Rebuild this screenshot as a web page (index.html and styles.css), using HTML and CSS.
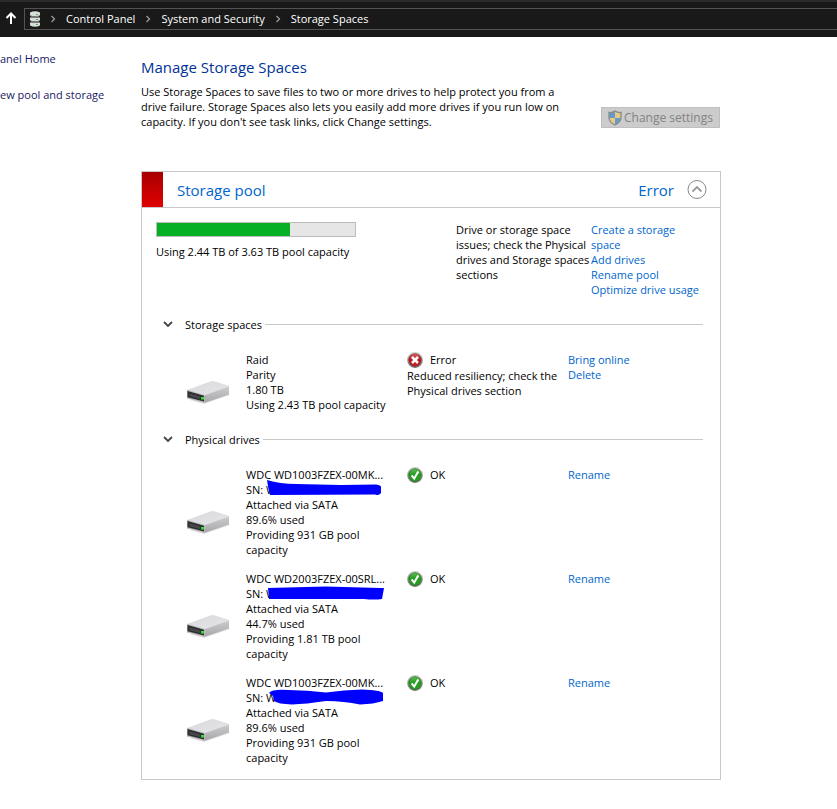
FILE: index.html
```html
<!DOCTYPE html>
<html lang="en">
<head>
<meta charset="utf-8">
<title>Storage Spaces</title>
<link rel="stylesheet" href="styles.css">
</head>
<body>
<svg class="symbols" aria-hidden="true">
  <defs>
    <linearGradient id="top-face" x1="0" y1="0" x2="1" y2="1"><stop offset="0" stop-color="#d9d9dc"/><stop offset="1" stop-color="#e6e6e9"/></linearGradient>
    <linearGradient id="side-face" x1="0" y1="0" x2="0" y2="1"><stop offset="0" stop-color="#cdcdcf"/><stop offset="1" stop-color="#a6a6a8"/></linearGradient>
    <linearGradient id="green-ball" x1="0" y1="0" x2="0" y2="1"><stop offset="0" stop-color="#63b957"/><stop offset=".5" stop-color="#239a1d"/><stop offset="1" stop-color="#2aa322"/></linearGradient>
    <linearGradient id="red-ball" x1="0" y1="0" x2="0" y2="1"><stop offset="0" stop-color="#d9666a"/><stop offset=".5" stop-color="#b5121b"/><stop offset="1" stop-color="#c9252d"/></linearGradient>
    <linearGradient id="rim" x1="0" y1="0" x2="0" y2="1"><stop offset="0" stop-color="#cfcfcf"/><stop offset="1" stop-color="#6e6e6e"/></linearGradient>
    <symbol id="drive" viewBox="0 0 48 48">
      <path d="M5 42 20 46 46 37 44 35 20 43Z" fill="#e2e2e2"/>
      <path d="M3 32 27 23.300Q28.500 22.800 30 23.200L44 27.500Q45.500 28 45 29.500L21 38.500Z" fill="url(#top-face)"/>
      <path d="M20 37.500 45 28.500V36.500L20 45Z" fill="url(#side-face)"/>
      <path d="M3 31.800 20.500 37V45L3 40.500Z" fill="#b9b9bb"/>
      <path d="M3.500 33 20 37.800V43.600L3.500 39.300Z" fill="#2d2f30"/>
      <path d="M5.500 35.500 16 38.500V41L5.500 38.200Z" fill="#464849"/>
      <rect x="17" y="39" width="3" height="2.500" fill="#35df35"/>
    </symbol>
    <symbol id="ok" viewBox="0 0 16 16">
      <circle cx="8" cy="8" r="7.900" fill="url(#rim)"/>
      <circle cx="8" cy="8" r="6.300" fill="url(#green-ball)" stroke="#176f16" stroke-width=".6"/>
      <path d="M4.600 8.300 7.200 11.400 11.300 4.400" fill="none" stroke="#fff" stroke-width="2"/>
    </symbol>
    <symbol id="error" viewBox="0 0 16 16">
      <circle cx="8" cy="8" r="7.900" fill="url(#rim)"/>
      <circle cx="8" cy="8" r="6.200" fill="url(#red-ball)" stroke="#8b1117" stroke-width=".6"/>
      <path d="M5 5 11 11M11 5 5 11" stroke="#fff" stroke-width="2.500"/>
    </symbol>
    <symbol id="crumb" viewBox="0 0 6 8"><path d="M1.500 1 4.500 4 1.500 7" fill="none" stroke="#999" stroke-width="1.300"/></symbol>
    <symbol id="chevron" viewBox="0 0 10 8"><path d="M1 1 5 5 9 1" fill="none" stroke="#444" stroke-width="1.800"/></symbol>
  </defs>
</svg>

<header class="toolbar">
  <button class="up" type="button" aria-label="Up">
    <svg width="12" height="14" viewBox="0 0 12 14"><path d="M6 12V1.500M1.500 6 6 1.500 10.500 6" fill="none" stroke="#fff" stroke-width="2"/></svg>
  </button>
  <nav class="address" aria-label="Address">
    <svg class="server" width="10" height="16" viewBox="0 0 10 16">
      <path d="M0 1.500Q5-1 10 1.500V4.500Q5 6 0 4.500Z" fill="#d9dcda"/>
      <path d="M0 6.500H10V9.500Q5 11 0 9.500ZM0 11.500H10V14.500Q5 17 0 14.500Z" fill="#d9dcda"/>
      <path d="M1 5H9V6H1ZM1 10H9V11H1Z" fill="#777"/>
      <path d="M6 3.500H8M6 8.500H8M6 13.500H8" stroke="#4fb548" stroke-width="1"/>
    </svg>
    <svg class="crumb"><use href="#crumb"/></svg>
    <a href="#">Control Panel</a>
    <svg class="crumb"><use href="#crumb"/></svg>
    <a href="#">System and Security</a>
    <svg class="crumb"><use href="#crumb"/></svg>
    <a href="#">Storage Spaces</a>
  </nav>
</header>

<div class="page">
  <nav class="side" aria-label="Tasks">
    <a href="#">anel Home</a>
    <a href="#">ew pool and storage</a>
  </nav>

  <main class="main">
    <h1>Manage Storage Spaces</h1>
    <div class="intro">
      <p>Use Storage Spaces to save files to two or more drives to help protect you from a<br>drive failure. Storage Spaces also lets you easily add more drives if you run low on<br>capacity. If you don't see task links, click Change settings.</p>
      <button class="change" type="button" disabled>
        <svg width="14" height="16" viewBox="0 0 14 16">
          <path d="M7 1Q4 3 1 2.500V8Q1.500 12.500 7 15Q12.500 12.500 13 8V2.500Q10 3 7 1Z" fill="#e9c983"/>
          <path d="M7 1Q4 3 1 2.500V8H7ZM7 8H13Q12.500 12.500 7 15Z" fill="#639bcb"/>
          <path d="M7 1Q4 3 1 2.500V8Q1.500 12.500 7 15Q12.500 12.500 13 8V2.500Q10 3 7 1Z" fill="none" stroke="#858a8c" stroke-width="1.300"/>
        </svg>
        Change settings
      </button>
    </div>

    <section class="pool">
      <header class="pool-head">
        <span class="flag"></span>
        <h2>Storage pool</h2>
        <span class="pool-state">Error</span>
        <button class="collapse" type="button" aria-label="Collapse">
          <svg width="20" height="20" viewBox="0 0 20 20"><circle cx="10" cy="9.500" r="9" fill="#fff" stroke="#888"/><path d="M5.500 11.500 10 7 14.500 11.500" fill="none" stroke="#999" stroke-width="1.800"/></svg>
        </button>
      </header>

      <div class="pool-body">
        <div class="summary">
          <div>
            <div class="meter"><div class="fill" style="width: 67%"></div></div>
            <p>Using 2.44 TB of 3.63 TB pool capacity</p>
          </div>
          <p>Drive or storage space<br>issues; check the Physical<br>drives and Storage spaces<br>sections</p>
          <div class="links">
            <a href="#">Create a storage<br>space</a>
            <a href="#">Add drives</a>
            <a href="#">Rename pool</a>
            <a href="#">Optimize drive usage</a>
          </div>
        </div>

        <h3><svg class="chevron"><use href="#chevron"/></svg>Storage spaces</h3>
        <div class="rows">
          <article class="row">
            <svg class="drive"><use href="#drive"/></svg>
            <p>Raid<br>Parity<br>1.80 TB<br>Using 2.43 TB pool capacity</p>
            <div>
              <div class="state"><svg class="badge"><use href="#error"/></svg>Error</div>
              <p>Reduced resiliency; check the<br>Physical drives section</p>
            </div>
            <div class="links"><a href="#">Bring online</a><a href="#">Delete</a></div>
          </article>
        </div>

        <h3><svg class="chevron"><use href="#chevron"/></svg>Physical drives</h3>
        <div class="rows">
          <article class="row">
            <svg class="drive"><use href="#drive"/></svg>
            <div>
              <p>WDC WD1003FZEX-00MK...</p>
              <p class="serial">SN: W<svg class="mark" viewBox="0 0 120 19"><path d="M1 1Q14 5 30 5L75 6 110 5.500Q116 6 115 9V14Q113 17 109 15.500L4 16Q2 9 1 1Z" fill="#00f"/></svg></p>
              <p>Attached via SATA<br>89.6% used<br>Providing 931 GB pool<br>capacity</p>
            </div>
            <div class="state"><svg class="badge"><use href="#ok"/></svg>OK</div>
            <div class="links"><a href="#">Rename</a></div>
          </article>
          <article class="row">
            <svg class="drive"><use href="#drive"/></svg>
            <div>
              <p>WDC WD2003FZEX-00SRL...</p>
              <p class="serial">SN: W<svg class="mark" viewBox="0 0 120 19"><path d="M2 5 40 4Q60 3 78 4L114 5 118 5 116 16Q108 17 98 16L3 16Z" fill="#00f"/></svg></p>
              <p>Attached via SATA<br>44.7% used<br>Providing 1.81 TB pool<br>capacity</p>
            </div>
            <div class="state"><svg class="badge"><use href="#ok"/></svg>OK</div>
            <div class="links"><a href="#">Rename</a></div>
          </article>
          <article class="row">
            <svg class="drive"><use href="#drive"/></svg>
            <div>
              <p>WDC WD1003FZEX-00MK...</p>
              <p class="serial">SN: W<svg class="mark" viewBox="0 0 120 19"><path d="M3 6Q6 2 22 3Q42 3 60 5.500Q78 3 96 2.500Q114 3 117 6V14Q108 17 94 17.500Q78 14 60 14Q40 17 26 17.500Q12 17 8 14L7 9Z" fill="#00f"/></svg></p>
              <p>Attached via SATA<br>89.6% used<br>Providing 931 GB pool<br>capacity</p>
            </div>
            <div class="state"><svg class="badge"><use href="#ok"/></svg>OK</div>
            <div class="links"><a href="#">Rename</a></div>
          </article>
        </div>
      </div>
    </section>
  </main>
</div>
</body>
</html>
```
FILE: styles.css
```css
* { box-sizing: border-box; }
body {
  margin: 0;
  background: #fff;
  color: #000;
  font: 11px/15px "Open Sans", "Noto Sans", sans-serif;
  white-space: nowrap;
}
h1, h2, h3, p { margin: 0; font-weight: 400; }
a { color: #0066cc; text-decoration: none; }
button { font: inherit; padding: 0; border: 0; background: none; }
svg { display: block; flex: none; }
.symbols { position: absolute; width: 0; height: 0; }

.toolbar {
  display: flex;
  align-items: center;
  height: 37px;
  padding: 0 0 2px 5px;
  gap: 7px;
  border-top: 2px solid #2b2b2b;
  background: #191919;
  overflow: hidden;
}
.address {
  flex: 1;
  display: flex;
  align-items: center;
  height: 22px;
  padding-left: 5px;
  gap: 10px;
  border: 1px solid #535353;
  border-right: 0;
}
.address a { color: #fff; }
.crumb { width: 6px; height: 8px; }

.page { display: flex; }
.side {
  display: flex;
  flex-direction: column;
  gap: 21px;
  width: 141px;
  padding-top: 14px;
}
.side a { color: #1a1a66; }
.main {
  flex: 1;
  max-width: 580px;
  padding-top: 20px;
}
h1 { color: #003399; font-size: 15px; line-height: 20px; }
.intro {
  display: flex;
  justify-content: space-between;
  align-items: flex-end;
  padding: 7px 1px 0 0;
}
.change {
  display: flex;
  align-items: center;
  justify-content: center;
  gap: 2px;
  width: 119px;
  height: 21px;
  margin-bottom: 1px;
  border: 1px solid #bfbfbf;
  background: #ccc;
  color: #838383;
  font-size: 12px;
}

.pool { margin-top: 42px; border: 1px solid #c8c8c8; }
.pool-head {
  display: flex;
  align-items: center;
  height: 36px;
  padding-right: 13px;
  border-bottom: 1px solid #c8c8c8;
}
.flag {
  align-self: stretch;
  width: 21px;
  background: linear-gradient(#a80000, #e00000);
}
h2, .pool-state { color: #0066cc; font-size: 15px; line-height: 20px; }
h2 { flex: 1; padding-left: 14px; }
.collapse { margin-left: 13px; }
.pool-body { padding: 14px 17px 14px 14px; }

.summary {
  display: grid;
  grid-template-columns: 300px 135px 1fr;
}
.meter {
  width: 200px;
  height: 15px;
  margin-bottom: 7px;
  border: 1px solid #bcbcbc;
  background: #e6e6e6;
}
.fill { height: 100%; background: #06b025; }
.links { display: flex; flex-direction: column; align-items: flex-start; }

h3 {
  display: flex;
  align-items: center;
  margin: 20px 0;
  padding-left: 7px;
  font-size: 11px;
}
h3::after {
  content: "";
  flex: 1;
  height: 1px;
  margin-left: 3px;
  background: #c8c8c8;
}
.chevron { width: 10px; height: 8px; margin-right: 12px; }
.rows { display: grid; gap: 14px; }
.row {
  display: grid;
  grid-template-columns: 62px 161px 161px 1fr;
  padding-left: 28px;
}
.drive { width: 48px; height: 48px; align-self: center; }
.state { display: flex; gap: 7px; height: 16px; }
.badge { width: 16px; height: 16px; }
.serial { position: relative; }
.mark { position: absolute; left: 20px; top: -3px; width: 120px; height: 19px; }
```
